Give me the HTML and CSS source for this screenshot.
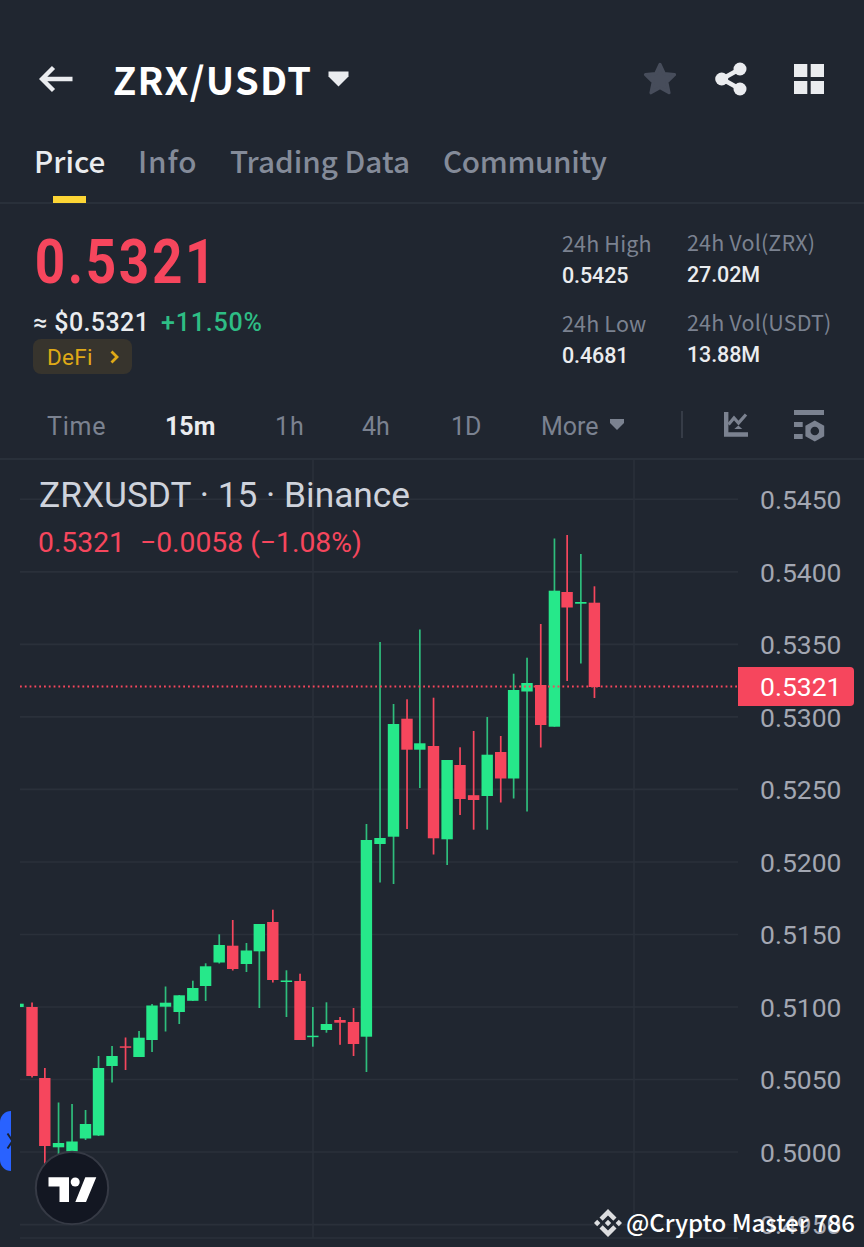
FILE: index.html
```html
<!DOCTYPE html>
<html lang="en">
<head>
    <meta charset="UTF-8">
    <meta name="viewport" content="width=device-width, initial-scale=1.0">
    <title>ZRX/USDT</title>
    <link rel="stylesheet" href="styles.css">
</head>
<body>

<header class="header">
    <svg class="back" width="34" height="28" viewBox="0 0 34 28">
        <path d="M14.5 2.500L3 14l11.500 11.500M3.500 14H33.500" fill="none" stroke="#eaecef" stroke-width="4.400"/>
    </svg>
    <h1>ZRX/USDT</h1>
    <svg class="caret" width="21" height="16" viewBox="0 0 21 16">
        <path d="M.5.5h20v5L10.500 15.500.5 5.500z" fill="#eaecef"/>
    </svg>
    <div class="actions">
        <svg width="34" height="34" viewBox="0 0 34 34">
            <path d="M17 2.500l4.200 9 10.300 1.200-7.700 7.300 2.200 10.700L17 25.700l-9 5L10.200 20l-7.700-7.300 10.300-1.200z" fill="#474d5b" stroke="#474d5b" stroke-width="3.200" stroke-linejoin="round"/>
        </svg>
        <svg width="32" height="34" viewBox="0 0 32 34">
            <path d="M25 7L7 17l18 10" fill="none" stroke="#eaecef" stroke-width="4.500"/>
            <circle cx="25" cy="7" r="6.500" fill="#eaecef"/>
            <circle cx="6.700" cy="17" r="6.500" fill="#eaecef"/>
            <circle cx="25" cy="27" r="6.500" fill="#eaecef"/>
        </svg>
        <svg width="30" height="30" viewBox="0 0 30 30">
            <path d="M0 0h13.300v13H0zM16.700 0H30v13H16.700zM0 17h13.300v13H0zM16.700 17H30v13H16.700z" fill="#eaecef"/>
        </svg>
    </div>
</header>

<nav class="tabs">
    <span class="tab active">Price</span>
    <span class="tab info">Info</span>
    <span class="tab trading">Trading Data</span>
    <span class="tab community">Community</span>
</nav>

<section class="summary">
    <div class="left">
        <div class="price">0.5321</div>
        <div class="sub"><span class="usd">≈ $0.5321</span><span class="change">+11.50%</span></div>
        <div class="tag">DeFi
            <svg width="10" height="14" viewBox="0 0 10 14"><path d="M1.500 1.500L7 7l-5.500 5.500" fill="none" stroke="#dfa917" stroke-width="2.800"/></svg>
        </div>
    </div>
    <div class="stats">
        <div class="stat"><label>24h High</label><b>0.5425</b></div>
        <div class="stat vol"><label>24h Vol(ZRX)</label><b>27.02M</b></div>
        <div class="stat"><label>24h Low</label><b>0.4681</b></div>
        <div class="stat vol"><label>24h Vol(USDT)</label><b>13.88M</b></div>
    </div>
</section>

<div class="periods">
    <span class="p-time">Time</span>
    <span class="p-15m">15m</span>
    <span class="p-1h">1h</span>
    <span class="p-4h">4h</span>
    <span class="p-1d">1D</span>
    <span class="p-more">More</span>
    <svg class="small-caret" width="14" height="11" viewBox="0 0 14 11"><path d="M0 0h14v4L7 11 0 4z" fill="#7b8290"/></svg>
    <i class="divider"></i>
    <svg class="indicator" width="24" height="25" viewBox="0 0 24 25">
        <path d="M2.200 0v22.500H24" fill="none" stroke="#7b8290" stroke-width="4.400"/>
        <path d="M4.500 12.500L10 6l4.500 5L22 2.500" fill="none" stroke="#7b8290" stroke-width="3.200"/>
        <path d="M14.300 13.500l4 3.500h-8z" fill="#7b8290"/>
    </svg>
    <svg class="settings" width="31" height="32" viewBox="0 0 31 32">
        <path d="M0 0h30v5H0zM0 12h8.700v5H0zM0 24h8.700v5H0z" fill="#7b8290"/>
        <path d="M20.800 10.500l9.400 5.300v10.400l-9.400 5.300-9.400-5.300V15.800z" fill="#7b8290"/>
        <circle cx="20.800" cy="21" r="4.300" fill="#202630"/>
    </svg>
</div>

<main class="chart">
    <svg id="plot" width="738" height="788" viewBox="0 460 738 788"></svg>
    <div class="axis" id="axis">
        <span class="last-price">0.5321</span>
    </div>
    <div class="legend">
        <div class="symbol">ZRXUSDT · 15 · Binance</div>
        <div class="values"><span>0.5321</span><span>−0.0058 (−1.08%)</span></div>
    </div>
    <div class="handle">
        <svg width="11" height="60" viewBox="0 0 11 60"><path d="M7.500 22.500l5 7.500-5 7.500" fill="none" stroke="#1b2130" stroke-width="2"/></svg>
    </div>
    <svg class="tv" width="76" height="76" viewBox="0 0 76 76">
        <circle cx="38" cy="38" r="36.200" fill="#131722" stroke="#363a45" stroke-width="2"/>
        <path d="M14.500 27.300H35V52h-9.500V36.500h-11zM51.300 27.300h11L52 52H41.300z" fill="#fff"/>
        <circle cx="41.200" cy="32" r="4.500" fill="#fff"/>
    </svg>
    <div class="author">
        <svg width="28" height="28" viewBox="0 0 28 28" fill="#dcdddf">
            <path d="M14 0l8.500 8.500-3.200 3.200L14 6.400l-5.300 5.300-3.200-3.200zM14 28l8.500-8.500-3.200-3.200L14 21.600l-5.300-5.300-3.200 3.200zM14 10.800l3.200 3.200-3.200 3.200-3.200-3.200zM3.200 10.800L6.400 14l-3.200 3.200L0 14zM24.800 10.800L28 14l-3.200 3.200-3.200-3.200z"/>
        </svg>
        <span>@Crypto Master 786</span>
    </div>
</main>

<script>
    // x, high, body top, body bottom, low, up/down
    const candles = [
        [18, 1003.7, 1003.7, 1007, 1007, "u"],
        [32, 1002.5, 1007, 1076, 1077.5, "d"],
        [44.8, 1068, 1078, 1146, 1166, "d"],
        [58.5, 1102.5, 1143, 1147.3, 1156, "u"],
        [72, 1104, 1141.5, 1151.5, 1153, "u"],
        [85.5, 1110, 1124, 1138.5, 1140, "u"],
        [98.5, 1056, 1068, 1135.5, 1136, "u"],
        [112, 1046, 1056, 1066, 1082.5, "u"],
        [125.5, 1037.5, 1046.3, 1047.8, 1070, "d"],
        [139, 1031, 1037.7, 1057, 1057, "u"],
        [152, 1004, 1005.5, 1040, 1052, "u"],
        [165.5, 986.5, 1002.7, 1006.7, 1031.5, "u"],
        [179.2, 995, 995.3, 1012, 1024, "u"],
        [192.8, 980.7, 988, 1000.8, 1001, "u"],
        [205.6, 963.3, 966.3, 986, 1001, "u"],
        [219.2, 934.3, 945, 962.5, 963.5, "u"],
        [232.7, 920, 945.7, 969, 970.5, "d"],
        [246.4, 943, 950.5, 964, 972, "u"],
        [259.3, 924, 924, 951.3, 1008, "u"],
        [272.8, 909.7, 922, 980, 982.5, "d"],
        [286.4, 970.3, 980.5, 982, 1017, "u"],
        [300, 973.7, 981, 1040, 1040, "d"],
        [312.8, 1007, 1035.7, 1037.2, 1046.7, "u"],
        [326.4, 1002.3, 1024, 1030, 1032.7, "u"],
        [340, 1017, 1020, 1022.7, 1044.8, "d"],
        [353.5, 1008, 1022, 1044, 1056, "d"],
        [366.4, 824, 840, 1036.7, 1072, "u"],
        [380, 642, 838, 844, 882.5, "u"],
        [393.5, 704, 724, 836.7, 884, "u"],
        [407, 699.3, 718.7, 749.7, 829, "d"],
        [419.8, 629.5, 743.3, 749.7, 788, "u"],
        [433.5, 697.7, 746, 838.3, 854.5, "d"],
        [447.1, 760, 760, 839.3, 865, "u"],
        [460, 747.3, 765, 799, 815, "d"],
        [473.6, 731, 795.2, 800, 829.7, "d"],
        [487.2, 717, 754.7, 796, 829.7, "u"],
        [500.7, 736, 752, 778.5, 802.5, "d"],
        [513.6, 673.7, 690, 778.5, 798.5, "u"],
        [527, 657.7, 683, 691.5, 811.5, "u"],
        [540.7, 624, 685, 725, 747.5, "d"],
        [554.4, 538.5, 590.7, 726.7, 726.7, "u"],
        [567.1, 535, 592, 607.5, 681, "d"],
        [580.8, 554, 602, 603.7, 663.5, "u"],
        [594.4, 586.3, 602.7, 687, 698, "d"]
    ];

    let svg = "";
    let axis = "";
    for (let i = 0; i < 11; i++) {
        let y = 499.3 + i * 72.53;
        svg += `<line class="grid" x1="20" x2="738" y1="${y}" y2="${y}"/>`;
        axis += `<span class="level">${(0.545 - i * 0.005).toFixed(4)}</span>`;
    }
    [313, 634].forEach(x => {
        svg += `<line class="grid" x1="${x}" x2="${x}" y1="460" y2="1238"/>`;
    });
    svg += `<line class="grid" x1="20" x2="738" y1="1238" y2="1238"/>`;

    candles.forEach(([x, high, top, bottom, low, dir]) => {
        let left = Math.max(20, x - 5.7);
        if (x > 20) {
            svg += `<rect class="wick ${dir}" x="${x - 0.8}" y="${high}" width="1.700" height="${low - high}"/>`;
        }
        svg += `<rect class="body ${dir}" x="${left}" y="${top}" width="${x + 5.7 - left}" height="${bottom - top}"/>`;
    });
    svg += `<line class="last" x1="20" x2="738" y1="686.5" y2="686.5"/>`;

    document.getElementById("plot").innerHTML = svg;
    document.getElementById("axis").insertAdjacentHTML("afterbegin", axis);
</script>

</body>
</html>
```

FILE: styles.css
```css
* {
    margin: 0;
    padding: 0;
    box-sizing: border-box;
}
body {
    width: 864px;
    height: 1247px;
    background: #202630;
    color: #eaecef;
    font-family: Roboto, "Liberation Sans", sans-serif;
    overflow: hidden;
}
svg {
    display: block;
    flex-shrink: 0;
}
.header {
    display: flex;
    align-items: center;
    height: 124px;
    padding: 36px 40px 0 39px;
}
.back {
    margin-top: -3px;
}
h1 {
    width: 215px;
    margin: -3px 0 0 40px;
    font-family: "Noto Sans CJK SC", sans-serif;
    font-size: 38px;
    font-weight: 700;
    line-height: 44px;
    letter-spacing: 1.300px;
    white-space: nowrap;
    color: #fff;
}
.caret {
    margin-top: -2px;
}
.actions {
    display: flex;
    align-items: center;
    margin-left: auto;
    margin-top: -2px;
}
.actions svg:nth-child(2) {
    margin: 0 47px 0 38px;
}
/* Tabs */
.tabs {
    display: flex;
    height: 80px;
    padding: 15px 34px 0;
    border-bottom: 2px solid #29303a;
    font-family: "Noto Sans CJK SC", sans-serif;
}
.tab {
    height: 62px;
    font-size: 29.700px;
    font-weight: 500;
    line-height: 44px;
    color: #848b99;
    white-space: nowrap;
}
.tab.active {
    width: 104px;
    color: #eaecef;
}
.tab.active::after {
    content: "";
    display: block;
    width: 33px;
    height: 7px;
    margin: 13px 0 0 19px;
    background: #fcd535;
}
.info {
    width: 92px;
    letter-spacing: 0.900px;
}
.trading {
    width: 213px;
}
.community {
    letter-spacing: -0.350px;
}
/* Price summary */
.summary {
    display: flex;
    height: 187px;
    padding: 0 0 0 33px;
}
.left {
    width: 529px;
}
.price {
    height: 99px;
    padding: 22px 0 0 2px;
    font-size: 61px;
    font-weight: 700;
    line-height: 72px;
    letter-spacing: 3px;
    color: #f6465d;
    transform: scaleX(0.87);
    transform-origin: left;
}
.sub {
    display: flex;
    height: 36px;
    font-size: 25px;
    font-weight: 500;
    line-height: 40px;
    letter-spacing: 0.400px;
}
.usd {
    width: 128px;
    white-space: nowrap;
}
.change {
    color: #2ebd85;
    letter-spacing: 0.800px;
}
.tag {
    display: flex;
    justify-content: space-between;
    align-items: center;
    width: 99px;
    height: 35px;
    padding: 0 12px 0 14px;
    border-radius: 8px;
    background: #37342d;
    color: #dfa917;
    font-size: 22.500px;
    letter-spacing: 0.300px;
}
.stats {
    display: grid;
    grid-template-columns: 125px 160px;
    grid-template-rows: 80px 80px;
    padding-top: 23px;
}
.stat label {
    display: block;
    font-family: "Noto Sans CJK SC", sans-serif;
    font-size: 21.500px;
    line-height: 32px;
    letter-spacing: 0.150px;
    color: #7b8290;
    white-space: nowrap;
}
.stat b {
    display: block;
    margin-top: 1px;
    font-size: 21.500px;
    font-weight: 500;
    line-height: 31px;
    letter-spacing: -0.100px;
}
.vol {
    margin-top: -1px;
}
/* Interval bar */
.periods {
    display: flex;
    align-items: center;
    height: 69px;
    padding: 3px 0 0 47px;
    border-bottom: 2px solid #29303a;
    font-size: 25px;
    color: #7b8290;
}
.p-time {
    width: 118px;
    letter-spacing: 0.800px;
}
.p-15m {
    width: 110px;
    font-weight: 700;
    color: #eaecef;
}
.p-1h {
    width: 87px;
    letter-spacing: 1px;
}
.p-4h {
    width: 89px;
}
.p-1d {
    width: 90px;
}
.p-more {
    width: 69px;
}
.small-caret {
    margin-top: -4px;
}
.divider {
    width: 2px;
    height: 27px;
    margin: -4px 41px 0 57px;
    background: #363c47;
}
.indicator {
    margin-top: -3px;
}
.settings {
    margin: -1px 0 0 46px;
}
/* Chart */
.chart {
    position: relative;
    display: flex;
    height: 788px;
}
.grid {
    stroke: #2a303a;
    stroke-width: 1.600;
}
.last {
    stroke: #f6465d;
    stroke-width: 1.800;
    stroke-dasharray: 1.800 3;
}
.body.u {
    fill: #26e88a;
}
.body.d, .wick.d {
    fill: #f6465d;
}
.wick.u {
    fill: #2ebd7c;
}
.axis {
    position: relative;
    width: 126px;
    padding-top: 3px;
}
.level {
    display: block;
    height: 72.530px;
    padding-left: 22px;
    font-size: 26.500px;
    line-height: 73px;
    color: #a3a7b2;
}
.last-price {
    position: absolute;
    left: 0;
    top: 207px;
    width: 116px;
    height: 39px;
    padding-left: 22px;
    border-radius: 0 4px 4px 0;
    background: #f6465d;
    color: #fff;
    font-size: 26.500px;
    line-height: 40px;
}
.legend {
    position: absolute;
    left: 38px;
    top: 13px;
    white-space: nowrap;
}
.symbol {
    padding-left: 1px;
    font-size: 35.300px;
    line-height: 44px;
    color: #cfd3dc;
}
.values {
    display: flex;
    gap: 15px;
    margin-top: 8px;
    font-size: 28.300px;
    line-height: 36px;
    color: #f6465d;
}
.handle {
    position: absolute;
    left: 0;
    top: 651px;
    width: 11px;
    height: 60px;
    border-radius: 11px 0 0 11px;
    background: #2962ff;
    overflow: hidden;
}
.tv {
    position: absolute;
    left: 34px;
    top: 690px;
}
.author {
    position: absolute;
    left: 594px;
    top: 743px;
    display: flex;
    align-items: center;
    gap: 4px;
    height: 40px;
    font-family: "Noto Sans CJK SC", sans-serif;
    font-size: 24px;
    font-weight: 500;
    color: #fff;
    white-space: nowrap;
}
.author span {
    margin-top: -4px;
    letter-spacing: -0.050px;
}
```
